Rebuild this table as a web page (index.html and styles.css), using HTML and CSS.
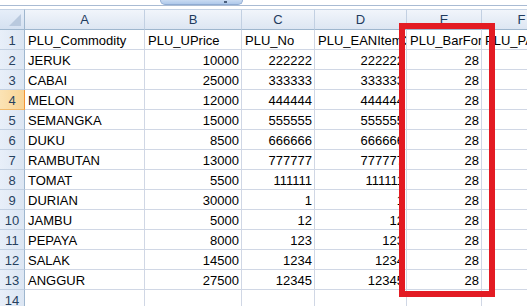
FILE: index.html
```html
<!DOCTYPE html>
<html>
<head>
<meta charset="utf-8">
<link rel="stylesheet" href="styles.css">
</head>
<body>
<div class="window">
  <div class="formulabar"><div class="expander"><span class="arrow"></span></div></div>
  <div class="grid">
    <div class="corner"><span class="tri"></span></div>
    <div class="colhdr">A</div><div class="colhdr">B</div><div class="colhdr">C</div><div class="colhdr">D</div><div class="colhdr">E</div><div class="colhdr">F</div>

    <div class="rowhdr">1</div><div class="c">PLU_Commodity</div><div class="c">PLU_UPrice</div><div class="c">PLU_No</div><div class="c">PLU_EANItemCode</div><div class="c">PLU_BarFormat</div><div class="c">PLU_PAName</div>
    <div class="rowhdr">2</div><div class="c">JERUK</div><div class="c n">10000</div><div class="c n">222222</div><div class="c n">222222</div><div class="c n">28</div><div class="c"></div>
    <div class="rowhdr">3</div><div class="c">CABAI</div><div class="c n">25000</div><div class="c n">333333</div><div class="c n">333333</div><div class="c n">28</div><div class="c"></div>
    <div class="rowhdr sel">4</div><div class="c">MELON</div><div class="c n">12000</div><div class="c n">444444</div><div class="c n">444444</div><div class="c n">28</div><div class="c"></div>
    <div class="rowhdr">5</div><div class="c">SEMANGKA</div><div class="c n">15000</div><div class="c n">555555</div><div class="c n">555555</div><div class="c n">28</div><div class="c"></div>
    <div class="rowhdr">6</div><div class="c">DUKU</div><div class="c n">8500</div><div class="c n">666666</div><div class="c n">666666</div><div class="c n">28</div><div class="c"></div>
    <div class="rowhdr">7</div><div class="c">RAMBUTAN</div><div class="c n">13000</div><div class="c n">777777</div><div class="c n">777777</div><div class="c n">28</div><div class="c"></div>
    <div class="rowhdr">8</div><div class="c">TOMAT</div><div class="c n">5500</div><div class="c n">111111</div><div class="c n">111111</div><div class="c n">28</div><div class="c"></div>
    <div class="rowhdr">9</div><div class="c">DURIAN</div><div class="c n">30000</div><div class="c n">1</div><div class="c n">1</div><div class="c n">28</div><div class="c"></div>
    <div class="rowhdr">10</div><div class="c">JAMBU</div><div class="c n">5000</div><div class="c n">12</div><div class="c n">12</div><div class="c n">28</div><div class="c"></div>
    <div class="rowhdr">11</div><div class="c">PEPAYA</div><div class="c n">8000</div><div class="c n">123</div><div class="c n">123</div><div class="c n">28</div><div class="c"></div>
    <div class="rowhdr">12</div><div class="c">SALAK</div><div class="c n">14500</div><div class="c n">1234</div><div class="c n">1234</div><div class="c n">28</div><div class="c"></div>
    <div class="rowhdr">13</div><div class="c">ANGGUR</div><div class="c n">27500</div><div class="c n">12345</div><div class="c n">12345</div><div class="c n">28</div><div class="c"></div>
    <div class="rowhdr">14</div><div class="c"></div><div class="c"></div><div class="c"></div><div class="c"></div><div class="c"></div><div class="c"></div>
  </div>
  <div class="highlight"></div>
</div>
</body>
</html>
```

FILE: styles.css
```css
html, body {
  margin: 0;
  padding: 0;
  background: #ffffff;
  overflow: hidden;
}

.window {
  position: relative;
  width: 527px;
  height: 306px;
  overflow: hidden;
  font-family: "Liberation Sans", Arial, sans-serif;
  font-size: 13px;
  color: #000000;
}

.formulabar {
  height: 5px;
  border-bottom: 1px solid #a9bbd3;
  margin-bottom: 3px;
  display: flex;
}

.expander {
  margin-left: 160px;
  width: 83px;
  height: 5px;
  box-sizing: border-box;
  border: 1px solid #90acd3;
  border-top: none;
  border-radius: 0 0 7px 7px;
  background: linear-gradient(#c9dbf2, #afc9ea);
  display: flex;
  justify-content: flex-end;
  padding-right: 15px;
}

.arrow {
  width: 3px;
  height: 2px;
  margin-top: 1px;
  background: #4a5f7d;
}

.grid {
  display: grid;
  grid-template-columns: 25px 120px 97px 73px 92px 75px 80px;
  grid-template-rows: 21px repeat(14, 20px);
}

.grid > div {
  box-sizing: border-box;
  overflow: hidden;
  white-space: nowrap;
}

.corner {
  position: relative;
  background: linear-gradient(#e6eef9, #d5e1f1);
  border-top: 1px solid #c5d3e5;
  border-right: 1px solid #9eb6ce;
  border-bottom: 1px solid #9eb6ce;
}

.tri {
  position: absolute;
  right: 3px;
  bottom: 3px;
  width: 0;
  height: 0;
  border-left: 12px solid transparent;
  border-bottom: 12px solid #b9c9de;
}

.colhdr {
  background: linear-gradient(#f1f5fb, #dde6f2);
  border-top: 1px solid #c5d3e5;
  border-right: 1px solid #c2d0e2;
  border-bottom: 1px solid #9eb6ce;
  color: #1f3b5e;
  text-align: center;
  line-height: 19px;
  font-size: 13px;
}

.rowhdr {
  background: linear-gradient(90deg, #e8eff9, #dce6f3);
  border-right: 1px solid #9eb6ce;
  border-bottom: 1px solid #c2d0e2;
  color: #27415f;
  text-align: center;
  line-height: 19px;
  padding-top: 1px;
}

.rowhdr.sel {
  background: linear-gradient(90deg, #fbe3b5, #f8d495);
  border-right: 1px solid #f29436;
  border-bottom: 1px solid #f1b96a;
}

.c {
  border-right: 1px solid #d0d7e5;
  border-bottom: 1px solid #d0d7e5;
  line-height: 16px;
  padding: 3px 2px 0 3px;
}

.c.n {
  text-align: right;
}

.highlight {
  position: absolute;
  left: 399px;
  top: 23px;
  width: 96px;
  height: 274px;
  box-sizing: border-box;
  border: 6px solid #e31b23;
}
```
